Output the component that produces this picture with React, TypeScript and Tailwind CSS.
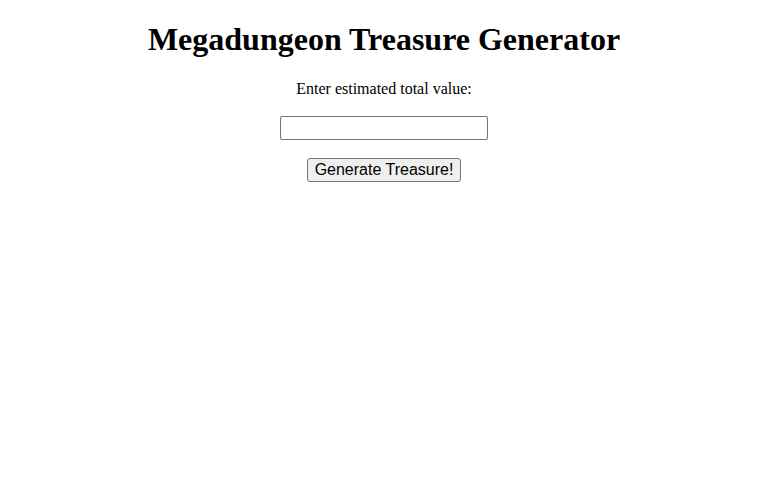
import React, { useState } from 'react';

export default function App() {
  const [value, setValue] = useState('');
  return (
    <div className="min-h-[480px] w-full bg-white text-black font-['Liberation_Serif',serif] text-center">
      <h1 className="pt-[21px] text-[32px] font-bold leading-[37px]">
        Megadungeon Treasure Generator
      </h1>
      <p className="mt-[22px] text-base leading-[18px]">Enter estimated total value:</p>
      <div className="mt-[18px] flex justify-center">
        <input
          type="text"
          value={value}
          onChange={(e) => setValue(e.target.value)}
          className="h-[24px] w-[208px] rounded-[2px] border border-[#767676] bg-white px-[2px] text-[13px] outline-none"
        />
      </div>
      <div className="mt-[18px] flex justify-center">
        <button
          type="button"
          className="h-[24px] rounded-[3px] border border-[#767676] bg-[#efefef] px-[7px] font-['Liberation_Sans',sans-serif] text-base leading-[20px] text-black"
        >
          Generate Treasure!
        </button>
      </div>
    </div>
  );
}
